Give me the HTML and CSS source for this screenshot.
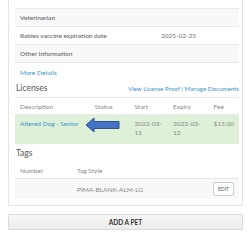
FILE: index.html
```html
<!DOCTYPE html>
<html>
<head>
    <meta charset="utf-8">
    <title>Pet Details</title>
    <link rel="stylesheet" href="styles.css">
</head>
<body>
    <div class="panel">
        <table class="info">
            <tr class="odd"><td class="label">Veterinarian</td><td></td></tr>
            <tr><td class="label">Rabies vaccine expiration date</td><td>2025-02-25</td></tr>
            <tr class="odd"><td class="label">Other Information</td><td></td></tr>
        </table>
        <div class="more"><a href="#">More Details</a></div>

        <div class="section-head">
            <h3>Licenses</h3>
            <div class="links"><a href="#">View License Proof</a> | <a href="#">Manage Documents</a></div>
        </div>
        <table class="grid licenses">
            <tr>
                <th class="c-desc">Description</th>
                <th class="c-status">Status</th>
                <th class="c-start">Start</th>
                <th class="c-exp">Expiry</th>
                <th>Fee</th>
            </tr>
            <tr class="active">
                <td class="desc">
                    <a href="#">Altered Dog - Senior</a>
                    <svg class="arrow" width="36" height="16" viewBox="0 0 36 16">
                        <path d="M1 8 L9 1 L9 4.5 L34 4.5 L34 11.5 L9 11.5 L9 15 Z" fill="#4472c4" stroke="#2f528f" stroke-width="1"/>
                    </svg>
                </td>
                <td></td>
                <td>2022-03-<br>11</td>
                <td>2023-03-<br>12</td>
                <td>$15.00</td>
            </tr>
        </table>

        <div class="section-head">
            <h3>Tags</h3>
        </div>
        <table class="grid tags">
            <tr>
                <th class="c-num">Number</th>
                <th>Tag Style</th>
                <th></th>
            </tr>
            <tr class="odd">
                <td></td>
                <td>PIMA-BLANK-ALM-LG</td>
                <td class="edit"><button>EDIT</button></td>
            </tr>
        </table>
    </div>

    <button class="add-pet">ADD A PET</button>
</body>
</html>
```

FILE: styles.css
```css
body {
    margin: 0;
    padding: 0 7px 0 8px;
    background-color: white;
    font-family: Lato, "Open Sans", sans-serif;
    font-size: 6.5px;
    color: #777;
}

a {
    color: #3a93cf;
    text-decoration: none;
}

.panel {
    border: 1px solid #e4e4e4;
    border-top: 0;
    padding: 8px 3px 6px 6px;
}

table {
    width: 100%;
    border-collapse: collapse;
}

.info td {
    height: 17px;
    padding: 0 5px;
    border-top: 1px solid #e8e8e8;
}
.info .label {
    width: 131px;
    font-weight: 600;
    color: #707070;
}
.odd {
    background-color: #f8f8f8;
}

.more {
    border-top: 1px solid #e8e8e8;
    padding: 6px 5px 3px;
}

.section-head {
    display: flex;
    justify-content: space-between;
    align-items: center;
    height: 18px;
}
.section-head h3 {
    margin: 0 0 0 1px;
    font-size: 8.5px;
    font-weight: normal;
    color: #555;
}
.links {
    font-size: 6.2px;
    color: #3a93cf;
}

.grid th {
    height: 16px;
    padding: 0 5px;
    text-align: left;
    font-weight: normal;
    color: #888;
    border-top: 1px solid #e8e8e8;
    border-bottom: 1px solid #e8e8e8;
}
.grid td {
    padding: 2px 5px;
    vertical-align: top;
    line-height: 9px;
    color: #888;
}
.licenses .c-desc { width: 66px; }
.licenses .c-status { width: 30px; }
.licenses .c-start { width: 29px; }
.licenses .c-exp { width: 31px; }

.active {
    background-color: #dff0d8;
}
.active td {
    height: 23px;
    padding-top: 4px;
}
.desc {
    position: relative;
}
.arrow {
    position: absolute;
    left: 70px;
    top: 2px;
}

.tags th {
    border-top: 0;
}
.tags .c-num { width: 47px; }
.tags td {
    height: 16px;
    vertical-align: middle;
}
.edit {
    text-align: right;
}
.edit button {
    font-family: Lato, sans-serif;
    font-size: 5px;
    color: #555;
    background-color: white;
    border: 1px solid #ccc;
    border-radius: 2px;
    padding: 3px 4px;
    height: 14px;
}

.add-pet {
    display: block;
    width: 100%;
    margin-top: 8px;
    height: 16px;
    font-family: Lato, sans-serif;
    font-size: 6.5px;
    font-weight: bold;
    color: #333;
    background: linear-gradient(#f6f6f6, #ececec);
    border: 1px solid #dcdcdc;
}
```
